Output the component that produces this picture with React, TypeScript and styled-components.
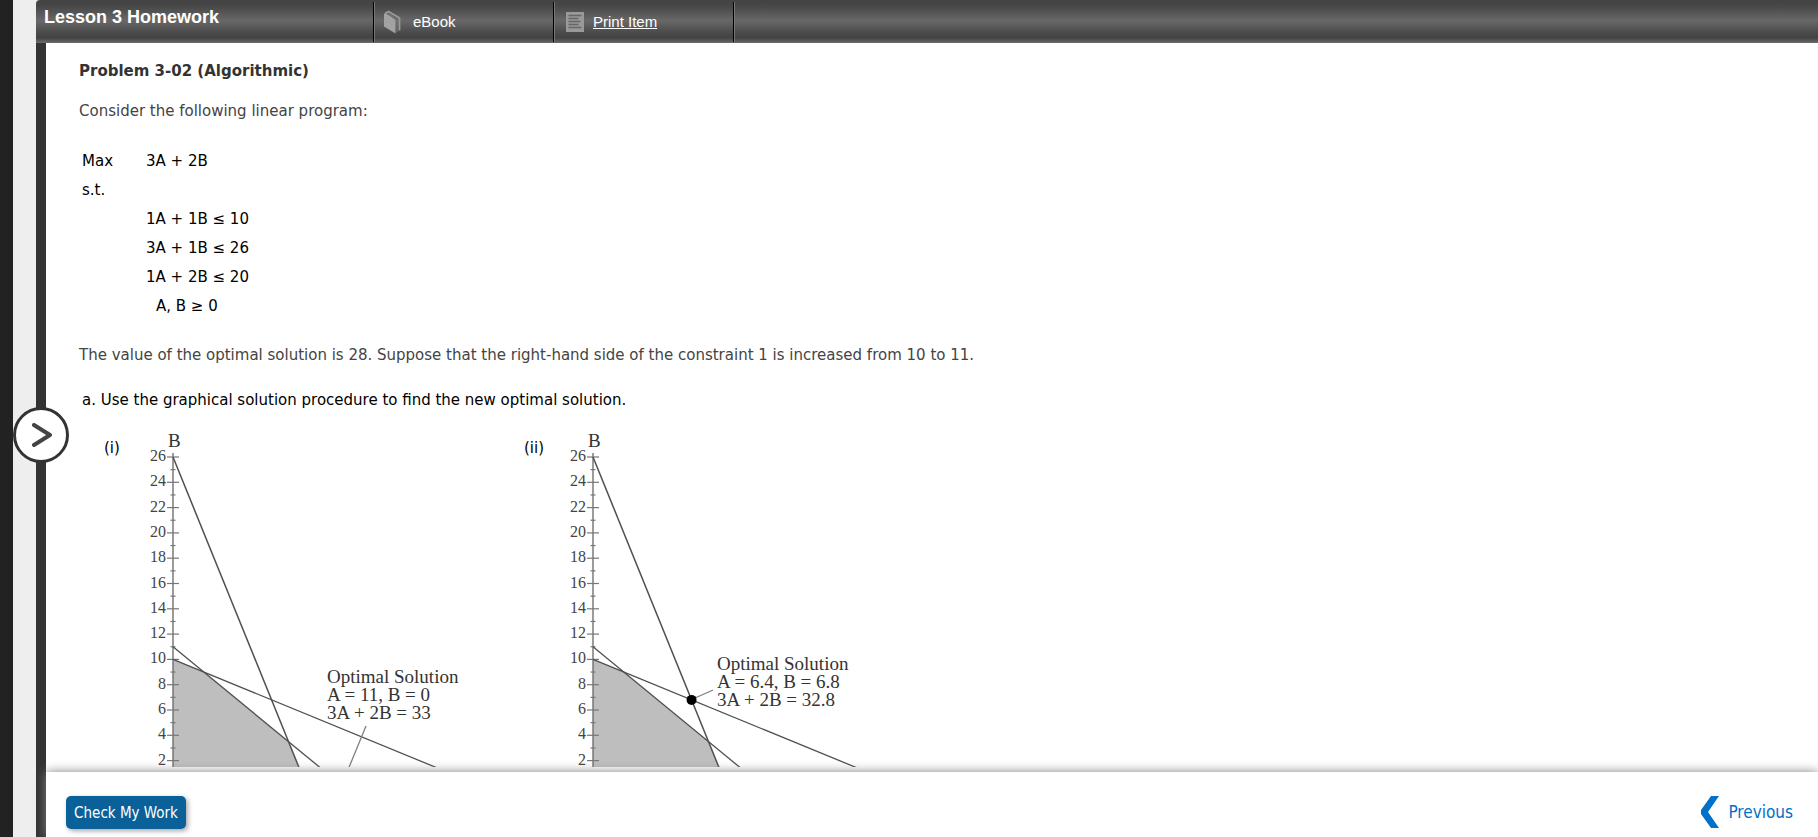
import React from "react";
import styled, { createGlobalStyle } from "styled-components";

const GlobalStyle = createGlobalStyle`
  * { box-sizing: border-box; }
  body { margin: 0; font-family: "DejaVu Sans", Verdana, sans-serif; font-size: 15px; line-height: 20px; color: #000; }
`;

const Shell = styled.div`
  position: relative;
  display: flex;
  height: 100vh;
  overflow: hidden;
  background: #eee;
`;

const Rail = styled.div`
  width: 13px;
  background: #222;
`;

const Panel = styled.div`
  flex: 1;
  min-width: 0;
  margin-left: 23px;
  display: flex;
  flex-direction: column;
`;

const Header = styled.header`
  display: flex;
  height: 43px;
  border-top-left-radius: 4px;
  background: linear-gradient(#434343 0%, #474747 14%, #686868 48%, #4c4c4c 74%, #434343 88%, #6c6c6c 100%);
  font-family: "Liberation Sans", Arial, sans-serif;
  color: #fff;
`;

const Title = styled.h1`
  width: 337px;
  margin: 0;
  padding: 7px 0 0 8px;
  font-size: 18px;
  line-height: 20px;
`;

const Tools = styled.nav`
  display: flex;
  margin: 2px 0 1px;
  border-right: 1px solid #000;
  box-shadow: 1px 0 #777;
`;

const Tool = styled.a<{ $underlined?: boolean }>`
  display: flex;
  align-items: center;
  width: 180px;
  padding: 0 0 0 10px;
  border-left: 1px solid #000;
  box-shadow: inset 1px 0 #777;
  color: #fff;
  font-size: 15px;
  line-height: 20px;
  text-decoration: ${(p) => (p.$underlined ? "underline" : "none")};

  svg { margin-right: 6px; }
`;

const Frame = styled.div`
  flex: 1;
  min-height: 0;
  display: flex;
  flex-direction: column;
  border-left: 10px solid #333;
  background: #fff;
`;

const Content = styled.main`
  flex: 1;
  min-height: 0;
  overflow-y: auto;
  scrollbar-width: none;
  padding: 18px 33px 0;
`;

const Heading = styled.h2`
  margin: 0 0 20px;
  font-size: 15px;
  line-height: 20px;
  color: #333;
`;

const Paragraph = styled.p`
  margin: 0;
  color: #444;
`;

const Program = styled.table`
  margin: 25px 0 25px 3px;
  border-collapse: collapse;

  td { height: 29px; padding: 0; }
  td:first-child { width: 64px; }
`;

const Indented = styled.span`
  padding-left: 10px;
`;

const Question = styled.p`
  margin: 25px 0 0 3px;
`;

const Charts = styled.div`
  display: flex;
  margin: 21px 0 0 25px;
`;

const Choice = styled.section`
  display: flex;
  width: 420px;
`;

const ChoiceLabel = styled.span`
  width: 41px;
  padding-top: 7px;
`;

const Graph = styled.svg`
  display: block;
  overflow: visible;
  font-family: "Liberation Serif", "Times New Roman", serif;
`;

const Footer = styled.footer`
  position: relative;
  display: flex;
  align-items: center;
  justify-content: space-between;
  height: 65px;
  margin-top: 5px;
  padding: 0 25px 0 20px;
  background: #fff;
  box-shadow: 0 0 10px gray;
`;

const CheckButton = styled.button`
  width: 120px;
  height: 33px;
  margin-top: 16px;
  padding: 0;
  border: 0;
  border-radius: 5px;
  background: #0a6199;
  box-shadow: 2px 2px 5px rgba(0, 0, 0, 0.35);
  color: #fff;
  font: 15px/20px "DejaVu Sans Condensed", Tahoma, sans-serif;
  white-space: nowrap;
`;

const Previous = styled.a`
  display: flex;
  align-items: center;
  gap: 9px;
  margin-top: 14px;
  color: #0070c9;
  font: 17px/20px "DejaVu Sans Condensed", Tahoma, sans-serif;
  text-decoration: none;
`;

const Toggle = styled.button`
  position: absolute;
  top: 52%;
  left: 13px;
  display: flex;
  align-items: center;
  justify-content: center;
  width: 56px;
  height: 56px;
  margin-top: -28px;
  padding: 0 0 0 2px;
  border: 3px solid #333;
  border-radius: 50%;
  background: #fff;
`;

const BookIcon = () => (
  <svg width="23" height="24" viewBox="0 0 23 24" aria-hidden="true">
    <path d="M0 4L2 3L11.500 10V23.500L0 16.500Z" fill="#a2a2a2" />
    <path d="M1 3.500L4.500 1.500L15.500 8V20.500" fill="none" stroke="#999" strokeWidth="1.800" />
    <path d="M3 4.500L5 4L13 9.500V22" fill="none" stroke="#777" strokeWidth="1.200" />
  </svg>
);

const PageIcon = () => (
  <svg width="23" height="20" viewBox="0 0 23 20" aria-hidden="true">
    <rect x="2" width="18" height="20" fill="#999" />
    <path d="M4.500 3.500H17.500M4.500 6.500H14.500M4.500 9.500H16.500M4.500 12.500H14.500M4.500 15.500H17.500" stroke="#666" strokeWidth="1.600" />
  </svg>
);

const AXIS_X = 28;
const UNIT_X = 15.4;
const TOP_Y = 26;
const UNIT_Y = 12.65;
const px = (a: number) => AXIS_X + a * UNIT_X;
const py = (b: number) => TOP_Y + (26 - b) * UNIT_Y;
const point = (a: number, b: number) => `${px(a)},${py(b)}`;

type ChartProps = {
  lines: string[];
  textX: number;
  textY: number;
  leader: [number, number, number, number];
  optimum?: [number, number];
};

function Chart({ lines, textX, textY, leader, optimum }: ChartProps) {
  const ticks = Array.from({ length: 26 }, (_, i) => i + 1);
  const segments = [
    [0, 26, 26 / 3, 0],
    [0, 11, 11, 0],
    [0, 10, 20, 0],
  ];
  return (
    <Graph width="360" height="370" role="img" aria-label={lines.join(" ")}>
      <polygon
        points={[point(0, 0), point(0, 10), point(2, 9), point(7.5, 3.5), point(26 / 3, 0)].join(" ")}
        fill="#bebebe"
      />
      <line x1={AXIS_X} x2={AXIS_X} y1={TOP_Y - 4} y2={py(0)} stroke="#666" strokeWidth="1.300" />
      {ticks.map((t) => {
        const reach = t % 2 ? 2.5 : 6;
        return (
          <line key={t} x1={AXIS_X - reach} x2={AXIS_X + reach} y1={py(t)} y2={py(t)} stroke="#777" strokeWidth="1.200" />
        );
      })}
      {ticks.filter((t) => t % 2 === 0).map((t) => (
        <text key={t} x={AXIS_X - 7} y={py(t) + 4} fontSize="16" textAnchor="end" fill="#444">{t}</text>
      ))}
      <text x={AXIS_X - 5} y="16" fontSize="19" fill="#333">B</text>
      {segments.map(([a1, b1, a2, b2], i) => (
        <line key={i} x1={px(a1)} y1={py(b1)} x2={px(a2)} y2={py(b2)} stroke="#505050" strokeWidth={i ? 1.3 : 1.5} />
      ))}
      <line x1={leader[0]} y1={leader[1]} x2={leader[2]} y2={leader[3]} stroke="#808080" strokeWidth="1.300" />
      {optimum && <circle cx={px(optimum[0])} cy={py(optimum[1])} r="5" fill="#000" />}
      {lines.map((line, i) => (
        <text key={line} x={textX} y={textY + i * 18} fontSize="19" fill="#333">{line}</text>
      ))}
    </Graph>
  );
}

const constraints = ["1A + 1B ≤ 10", "3A + 1B ≤ 26", "1A + 2B ≤ 20"];

export default function App() {
  return (
    <>
      <GlobalStyle />
      <Shell>
        <Rail />
        <Panel>
          <Header>
            <Title>Lesson 3 Homework</Title>
            <Tools>
              <Tool href="#ebook"><BookIcon />eBook</Tool>
              <Tool href="#print" $underlined><PageIcon />Print Item</Tool>
            </Tools>
          </Header>
          <Frame>
            <Content>
              <Heading>Problem 3-02 (Algorithmic)</Heading>
              <Paragraph>Consider the following linear program:</Paragraph>
              <Program>
                <tbody>
                  <tr><td>Max</td><td>3A + 2B</td></tr>
                  <tr><td>s.t.</td><td /></tr>
                  {constraints.map((c) => (
                    <tr key={c}><td /><td>{c}</td></tr>
                  ))}
                  <tr><td /><td><Indented>A, B ≥ 0</Indented></td></tr>
                </tbody>
              </Program>
              <Paragraph>
                The value of the optimal solution is 28. Suppose that the right-hand side of the constraint 1 is increased from 10 to 11.
              </Paragraph>
              <Question>a. Use the graphical solution procedure to find the new optimal solution.</Question>
              <Charts>
                <Choice>
                  <ChoiceLabel>(i)</ChoiceLabel>
                  <Chart
                    lines={["Optimal Solution", "A = 11, B = 0", "3A + 2B = 33"]}
                    textX={182}
                    textY={252}
                    leader={[221, 295, 198, 351]}
                  />
                </Choice>
                <Choice>
                  <ChoiceLabel>(ii)</ChoiceLabel>
                  <Chart
                    lines={["Optimal Solution", "A = 6.4, B = 6.8", "3A + 2B = 32.8"]}
                    textX={152}
                    textY={239}
                    leader={[148, 259, 130, 267]}
                    optimum={[6.4, 6.8]}
                  />
                </Choice>
              </Charts>
            </Content>
            <Footer>
              <CheckButton type="button">Check My Work</CheckButton>
              <Previous href="#previous">
                <svg width="18" height="32" viewBox="0 0 18 32" aria-hidden="true">
                  <path d="M10 0H18L7 16L18 32H10L0 18V14Z" fill="#0070c9" />
                </svg>
                Previous
              </Previous>
            </Footer>
          </Frame>
        </Panel>
        <Toggle type="button" aria-label="Open navigation">
          <svg width="20" height="24" viewBox="0 0 20 24" fill="none" stroke="#444" strokeWidth="4" aria-hidden="true">
            <path d="M2 2L18 12L2 22" strokeLinecap="round" strokeLinejoin="round" />
          </svg>
        </Toggle>
      </Shell>
    </>
  );
}
